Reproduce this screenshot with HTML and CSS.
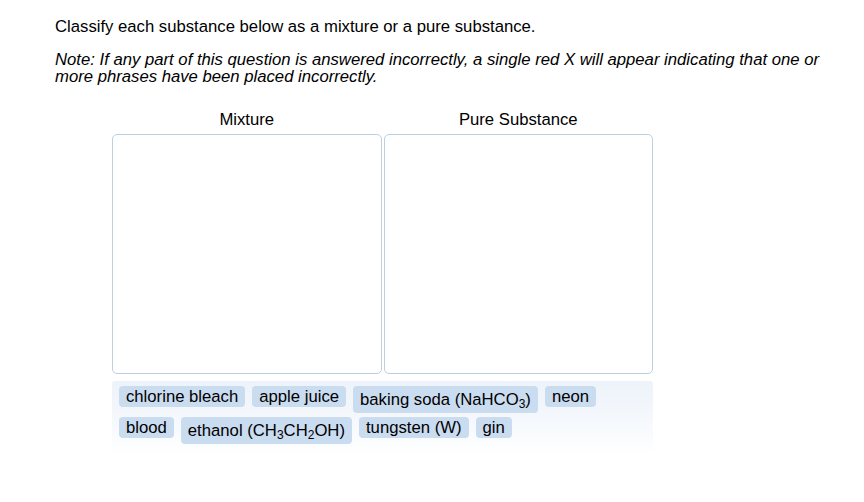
FILE: index.html
```html
<!DOCTYPE html>
<html>
<head>
    <meta charset="UTF-8">
    <meta name="viewport" content="width=device-width, initial-scale=1.0">
    <title>Classify Substances</title>
    <link rel="stylesheet" href="styles.css">
</head>
<body>
    <div class="question">
        <p class="prompt">Classify each substance below as a mixture or a pure substance.</p>
        <p class="note">Note: If any part of this question is answered incorrectly, a single red X will appear indicating that one or more phrases have been placed incorrectly.</p>
    </div>

    <div class="board">
        <div class="bins">
            <div class="bin">
                <div class="bin-label">Mixture</div>
                <div class="bin-box"></div>
            </div>
            <div class="bin">
                <div class="bin-label">Pure Substance</div>
                <div class="bin-box"></div>
            </div>
        </div>

        <div class="tray">
            <div class="chip-row">
                <span class="chip">chlorine bleach</span>
                <span class="chip">apple juice</span>
                <span class="chip tall">baking soda (NaHCO<sub>3</sub>)</span>
                <span class="chip">neon</span>
            </div>
            <div class="chip-row">
                <span class="chip">blood</span>
                <span class="chip tall">ethanol (CH<sub>3</sub>CH<sub>2</sub>OH)</span>
                <span class="chip">tungsten (W)</span>
                <span class="chip">gin</span>
            </div>
        </div>
    </div>
</body>
</html>
```

FILE: styles.css
```css
body {
    margin: 0;
    font-family: "Liberation Sans", Arial, sans-serif;
    font-size: 16.7px;
    color: #000;
    background: #fff;
}
.question {
    padding: 18px 30px 0 55px;
}
.prompt {
    margin: 0;
    line-height: 18px;
}
.note {
    margin: 15px 0 0;
    font-style: italic;
    line-height: 17px;
}
.board {
    width: 541px;
    margin: 26px 0 0 112px;
}
.bins {
    display: flex;
    gap: 2px;
}
.bin {
    flex: 1;
}
.bin-label {
    text-align: center;
    line-height: 18px;
    margin-bottom: 5px;
}
.bin-box {
    height: 238px;
    border: 1px solid #bcd0e2;
    border-radius: 5px;
}
.tray {
    margin-top: 7px;
    padding: 5px 7px 6px;
    background: linear-gradient(#edf3fa, #f6f9fd 60%, #fff);
    border-radius: 3px;
}
.chip-row {
    display: flex;
    align-items: flex-start;
    gap: 7px;
    margin-bottom: 4px;
}
.chip {
    background: #cadcf0;
    border-radius: 4px;
    padding: 2px 7px;
    line-height: 17px;
}
.chip.tall {
    padding: 5px 7px;
}
.chip sub {
    font-size: 12px;
    line-height: 0;
    vertical-align: -3px;
}
```
